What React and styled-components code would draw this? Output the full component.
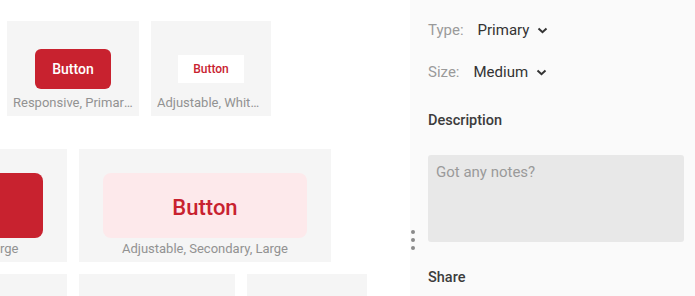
import React from 'react';
import styled, { createGlobalStyle } from 'styled-components';

const GlobalStyle = createGlobalStyle`
  html, body {
    margin: 0;
    padding: 0;
    background: #ffffff;
    font-family: Roboto, "Liberation Sans", Arial, sans-serif;
  }
`;

const Page = styled.div`
  display: flex;
  width: 695px;
  height: 296px;
  overflow: hidden;
`;

// Canvas with the variant cards
const Canvas = styled.div`
  flex: 0 0 410px;
  overflow: hidden;
  background: #ffffff;
`;

const Row = styled.div`
  display: flex;
  align-items: flex-start;
  gap: 12px;
  margin-left: ${(p) => p.$offset}px;
  margin-top: ${(p) => p.$top}px;
`;

const Card = styled.div`
  flex: 0 0 ${(p) => p.$width}px;
  min-width: 0;
  box-sizing: border-box;
  display: flex;
  flex-direction: column;
  align-items: center;
  background: #f5f5f5;
  padding: ${(p) => (p.$large ? '24px 6px 6px' : '28px 6px 6px')};
  min-height: ${(p) => p.$height || 0}px;
`;

const Preview = styled.div`
  height: ${(p) => (p.$large ? 65 : 40)}px;
  display: flex;
  align-items: center;
  justify-content: center;
  align-self: stretch;
  padding: 0 ${(p) => (p.$large ? 18 : 0)}px;
`;

const kinds = {
  primary: { bg: '#c8222f', color: '#ffffff' },
  white: { bg: '#ffffff', color: '#c8222f' },
  secondary: { bg: '#fde9eb', color: '#c8222f' },
};

const sizes = {
  small: { w: '66px', h: 28, font: 12, radius: 0, pt: 0 },
  medium: { w: '76px', h: 40, font: 14, radius: 6, pt: 0 },
  large: { w: '204px', h: 65, font: 22, radius: 8, pt: 3 },
  fill: { w: '100%', h: 65, font: 22, radius: 8, pt: 3 },
};

const Button = styled.div`
  box-sizing: border-box;
  width: ${(p) => sizes[p.$size].w};
  height: ${(p) => sizes[p.$size].h}px;
  padding-top: ${(p) => sizes[p.$size].pt}px;
  flex-shrink: 0;
  border-radius: ${(p) => sizes[p.$size].radius}px;
  background: ${(p) => kinds[p.$kind].bg};
  color: ${(p) => kinds[p.$kind].color};
  font-size: ${(p) => sizes[p.$size].font}px;
  font-weight: 500;
  display: flex;
  align-items: center;
  justify-content: center;
`;

const Label = styled.div`
  margin-top: ${(p) => (p.$large ? 4 : 7)}px;
  width: 100%;
  font-size: 13px;
  line-height: 14px;
  color: #929292;
  text-align: center;
  white-space: nowrap;
  overflow: hidden;
  text-overflow: ${(p) => (p.$clip ? 'clip' : 'ellipsis')};
`;

// Right side panel
const Panel = styled.div`
  flex: 1;
  position: relative;
  background: #fafafa;
  padding: 19px 11px 0 18px;
  box-sizing: border-box;
  display: flex;
  flex-direction: column;
`;

const Handle = styled.div`
  position: absolute;
  left: 1px;
  top: 230px;
  display: flex;
  flex-direction: column;
  gap: 4px;
`;

const Dot = styled.span`
  width: 4px;
  height: 4px;
  border-radius: 50%;
  background: #8a8a8a;
`;

const Field = styled.div`
  display: flex;
  align-items: center;
  height: 22px;
  margin-bottom: ${(p) => p.$mb || 0}px;
  font-size: 15px;
`;

const FieldName = styled.span`
  color: #9a9a9a;
  margin-right: 14px;
`;

const FieldValue = styled.span`
  color: #333333;
  margin-right: 8px;
`;

const Heading = styled.div`
  font-size: 14.5px;
  font-weight: 500;
  color: #3c3c3c;
  line-height: 18px;
  margin-bottom: ${(p) => p.$mb || 0}px;
`;

const Notes = styled.div`
  height: 87px;
  background: #e8e8e8;
  border-radius: 3px;
  padding: 8px 8px;
  box-sizing: border-box;
  font-size: 15px;
  color: #9a9a9a;
  margin-bottom: 27px;
`;

const Chevron = () => (
  <svg width="11" height="7" viewBox="0 0 11 7">
    <path d="M1.5 1.5 L5.5 5.2 L9.5 1.5" fill="none" stroke="#333" strokeWidth="2" />
  </svg>
);

const App = () => {
  return (<>
    <GlobalStyle />
    <Page>
      <Canvas>
        <Row $offset={7} $top={21}>
          <Card $width={132}>
            <Preview><Button $kind="primary" $size="medium">Button</Button></Preview>
            <Label>Responsive, Primary, Medium</Label>
          </Card>
          <Card $width={120}>
            <Preview><Button $kind="white" $size="small">Button</Button></Preview>
            <Label>Adjustable, White, Small</Label>
          </Card>
        </Row>

        <Row $offset={-185} $top={33}>
          <Card $width={252} $large>
            <Preview $large><Button $kind="primary" $size="fill">Button</Button></Preview>
            <Label $large $clip>Responsive, Primary, Large</Label>
          </Card>
          <Card $width={252} $large>
            <Preview $large><Button $kind="secondary" $size="large">Button</Button></Preview>
            <Label $large>Adjustable, Secondary, Large</Label>
          </Card>
        </Row>

        <Row $offset={-185} $top={12}>
          <Card $width={252} $height={60} />
          <Card $width={156} $height={60} />
          <Card $width={120} $height={60} />
        </Row>
      </Canvas>

      <Panel>
        <Handle>
          <Dot />
          <Dot />
          <Dot />
        </Handle>
        <Field $mb={20}>
          <FieldName>Type:</FieldName>
          <FieldValue>Primary</FieldValue>
          <Chevron />
        </Field>
        <Field $mb={29}>
          <FieldName>Size:</FieldName>
          <FieldValue>Medium</FieldValue>
          <Chevron />
        </Field>
        <Heading $mb={25}>Description</Heading>
        <Notes>Got any notes?</Notes>
        <Heading>Share</Heading>
      </Panel>
    </Page>
    </>
  );
};

export default App;
